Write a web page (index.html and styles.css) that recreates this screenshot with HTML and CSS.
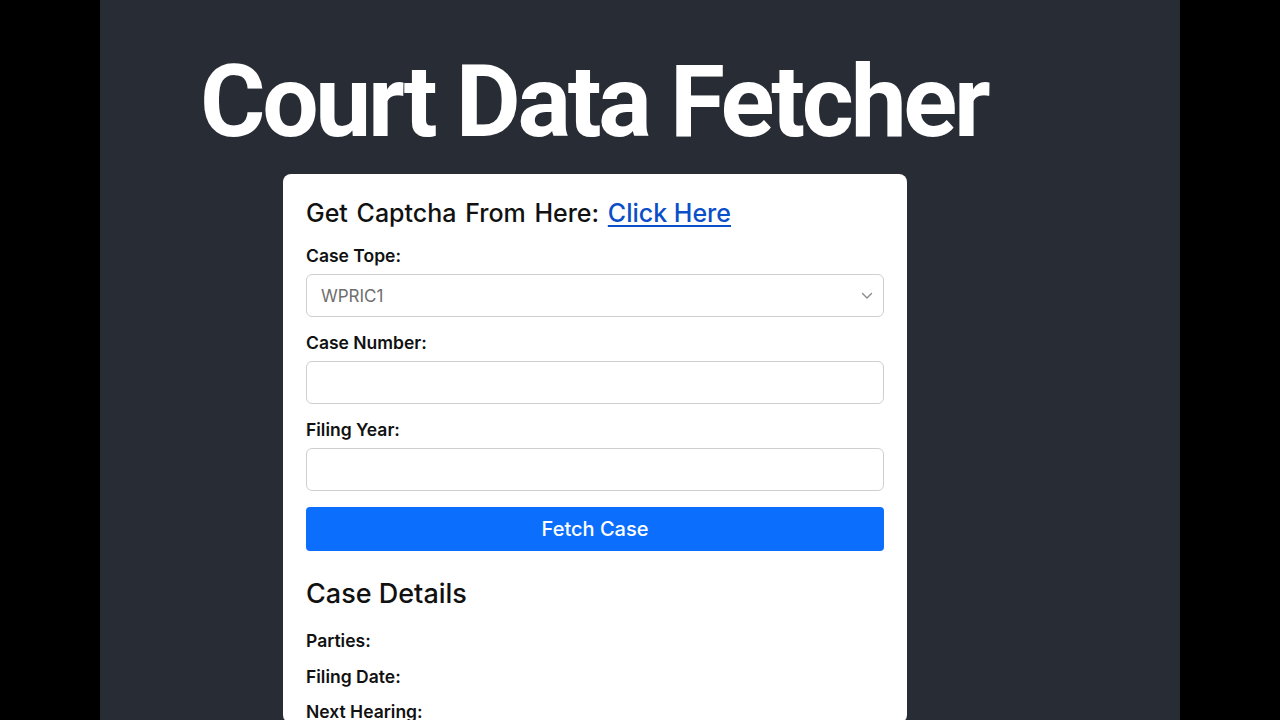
FILE: index.html
```html
<!DOCTYPE html>
<html lang="en">
<head>
<meta charset="utf-8">
<title>Court Data Fetcher</title>
<link rel="stylesheet" href="styles.css">
</head>
<body>
<div class="frame">
  <main class="app">
    <h1 class="title">Court Data Fetcher</h1>
    <section class="card">
      <h2 class="captcha">Get Captcha From Here: <a href="#" class="link">Click Here</a></h2>
      <form class="form">
        <div class="field">
          <label class="label" for="type">Case Tope:</label>
          <div class="select-wrap">
            <select id="type" class="control select">
              <option>WPRIC1</option>
            </select>
            <svg class="chevron" width="12" height="8" viewBox="0 0 12 8"><path d="M1.5 1.5 L6 6 L10.5 1.5" fill="none" stroke="#8a8a8a" stroke-width="1.4" stroke-linecap="round" stroke-linejoin="round"/></svg>
          </div>
        </div>
        <div class="field">
          <label class="label" for="num">Case Number:</label>
          <input id="num" class="control" type="text">
        </div>
        <div class="field">
          <label class="label" for="year">Filing Year:</label>
          <input id="year" class="control" type="text">
        </div>
        <button type="button" class="btn">Fetch Case</button>
      </form>
      <h2 class="details-title">Case Details</h2>
      <div class="details">
        <p class="detail">Parties:</p>
        <p class="detail">Filing Date:</p>
        <p class="detail">Next Hearing:</p>
      </div>
    </section>
  </main>
</div>
</body>
</html>
```

FILE: styles.css
```css
* { box-sizing: border-box; }
html, body { margin: 0; padding: 0; background: #000; height: 100%; overflow: hidden; }
body { font-family: Inter, "Liberation Sans", Arial, sans-serif; }
.frame { display: flex; justify-content: center; height: 720px; overflow: hidden; }
.app {
  width: 1080px;
  background: #282c34;
  display: flex;
  flex-direction: column;
  align-items: flex-start;
}
.title {
  flex: none;
  margin: 52px 0 0 100px;
  color: #fff;
  font-family: Roboto, "Liberation Sans", Arial, sans-serif;
  font-weight: 700;
  font-size: 100px;
  line-height: 100px;
  letter-spacing: -3.3px;
  height: 122px;
}
.card {
  flex: 1 0 auto;
  width: 624px;
  margin-left: 183px;
  background: #fff;
  border-radius: 8px;
  padding: 24px 23px 0 23px;
}
.captcha {
  margin: 0 0 17px 0;
  font-size: 25px;
  font-weight: 500;
  color: #111;
  line-height: 30px;
  word-spacing: 2px;
}
.link { color: #0b4fc8; word-spacing: 0; text-decoration: underline; text-underline-offset: 3px; text-decoration-thickness: 1.5px; }
.form { display: flex; flex-direction: column; }
.field { display: flex; flex-direction: column; margin-bottom: 15px; }
.label { font-size: 17.5px; font-weight: 600; color: #111; line-height: 22px; margin-bottom: 7px; }
.select-wrap { position: relative; }
.control {
  width: 100%;
  height: 43px;
  border: 1px solid #cfcfcf;
  border-radius: 6px;
  background: #fff;
  font-family: inherit;
  font-size: 17px;
  padding: 0 14px;
  outline: none;
  -webkit-appearance: none;
  appearance: none;
  color: #6e6e6e;
}
.chevron { position: absolute; right: 11px; top: 18px; pointer-events: none; }
.btn {
  height: 44px;
  margin-top: 1px;
  border: none;
  border-radius: 4px;
  background: #0b6efd;
  color: #fff;
  font-family: inherit;
  font-size: 20px;
  font-weight: 500;
}
.details-title { margin: 26px 0 19px 0; font-size: 27px; font-weight: 500; color: #111; line-height: 34px; }
.details { display: flex; flex-direction: column; gap: 13.5px; }
.detail { margin: 0; font-size: 17.5px; font-weight: 600; color: #111; line-height: 22px; }
```
